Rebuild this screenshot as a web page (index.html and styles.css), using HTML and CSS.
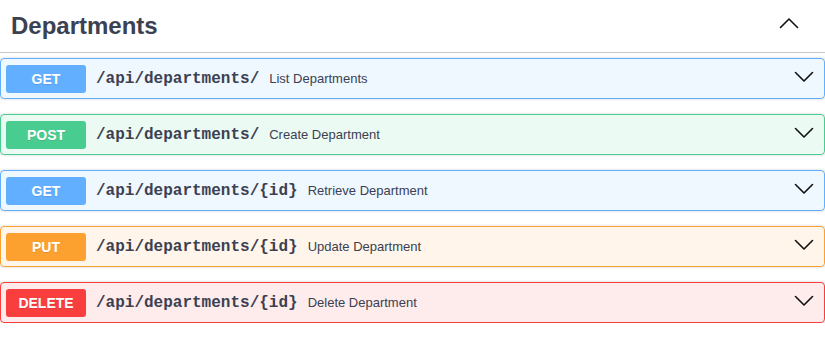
FILE: index.html
```html
<!DOCTYPE html>
<html>
<head>
<meta charset="utf-8">
<link rel="stylesheet" href="styles.css">
</head>
<body>
<div class="tag-section">
  <h3 class="tag-header">
    <span class="tag-title">Departments</span>
    <svg class="arrow arrow-up" viewBox="0 0 20 20" width="20" height="20"><polyline points="1.5,14.5 10,6 18.5,14.5"/></svg>
  </h3>
  <div class="ops">
    <div class="opblock get">
      <span class="method">GET</span>
      <span class="path">/api/departments/</span>
      <span class="desc">List Departments</span>
      <svg class="arrow" viewBox="0 0 20 20" width="20" height="20"><polyline points="1.5,5.5 10,14 18.5,5.5"/></svg>
    </div>
    <div class="opblock post">
      <span class="method">POST</span>
      <span class="path">/api/departments/</span>
      <span class="desc">Create Department</span>
      <svg class="arrow" viewBox="0 0 20 20" width="20" height="20"><polyline points="1.5,5.5 10,14 18.5,5.5"/></svg>
    </div>
    <div class="opblock get">
      <span class="method">GET</span>
      <span class="path">/api/departments/{id}</span>
      <span class="desc">Retrieve Department</span>
      <svg class="arrow" viewBox="0 0 20 20" width="20" height="20"><polyline points="1.5,5.5 10,14 18.5,5.5"/></svg>
    </div>
    <div class="opblock put">
      <span class="method">PUT</span>
      <span class="path">/api/departments/{id}</span>
      <span class="desc">Update Department</span>
      <svg class="arrow" viewBox="0 0 20 20" width="20" height="20"><polyline points="1.5,5.5 10,14 18.5,5.5"/></svg>
    </div>
    <div class="opblock delete">
      <span class="method">DELETE</span>
      <span class="path">/api/departments/{id}</span>
      <span class="desc">Delete Department</span>
      <svg class="arrow" viewBox="0 0 20 20" width="20" height="20"><polyline points="1.5,5.5 10,14 18.5,5.5"/></svg>
    </div>
  </div>
</div>
</body>
</html>
```
FILE: styles.css
```css
html, body {
  margin: 0;
  padding: 0;
  background: #fff;
  font-family: "Liberation Sans", Arial, sans-serif;
  color: #3b4151;
}
.tag-section {
  width: 825px;
}
.tag-header {
  display: flex;
  align-items: center;
  margin: 0 0 5px;
  padding: 10px 20px 10px 11px;
  height: 32px;
  border-bottom: 1px solid rgba(59, 65, 81, 0.3);
  font-size: 24px;
  font-weight: bold;
  line-height: 32px;
  color: #3b4151;
}
.tag-title {
  flex: 1;
}
.arrow {
  display: block;
  flex: none;
  fill: none;
  stroke: #111;
  stroke-width: 1.6;
  stroke-linecap: round;
  stroke-linejoin: round;
}
.arrow-up {
  margin-right: 6px;
  margin-bottom: 6px;
}
.ops {
  display: flex;
  flex-direction: column;
  gap: 15px;
}
.opblock {
  display: flex;
  align-items: center;
  height: 29px;
  padding: 5px;
  border: 1px solid;
  border-radius: 4px;
  box-shadow: 0 0 3px rgba(0, 0, 0, 0.19);
  width: 813px;
}
.method {
  flex: none;
  width: 80px;
  height: 28px;
  line-height: 28px;
  text-align: center;
  border-radius: 3px;
  color: #fff;
  font-size: 14px;
  font-weight: bold;
  text-shadow: 0 1px 0 rgba(0, 0, 0, 0.1);
}
.path {
  flex: none;
  padding: 0 10px;
  font-family: "Liberation Mono", Courier, monospace;
  font-size: 16px;
  font-weight: bold;
  color: #3b4151;
}
.desc {
  flex: 1;
  font-size: 13px;
  color: #3b4151;
}
.opblock .arrow {
  margin-right: 5px;
  margin-bottom: 4px;
}
.get { background: rgba(97, 175, 254, 0.1); border-color: #61affe; }
.get .method { background: #61affe; }
.post { background: rgba(73, 204, 144, 0.1); border-color: #49cc90; }
.post .method { background: #49cc90; }
.put { background: rgba(252, 161, 48, 0.1); border-color: #fca130; }
.put .method { background: #fca130; }
.delete { background: rgba(249, 62, 62, 0.1); border-color: #f93e3e; }
.delete .method { background: #f93e3e; }
```
